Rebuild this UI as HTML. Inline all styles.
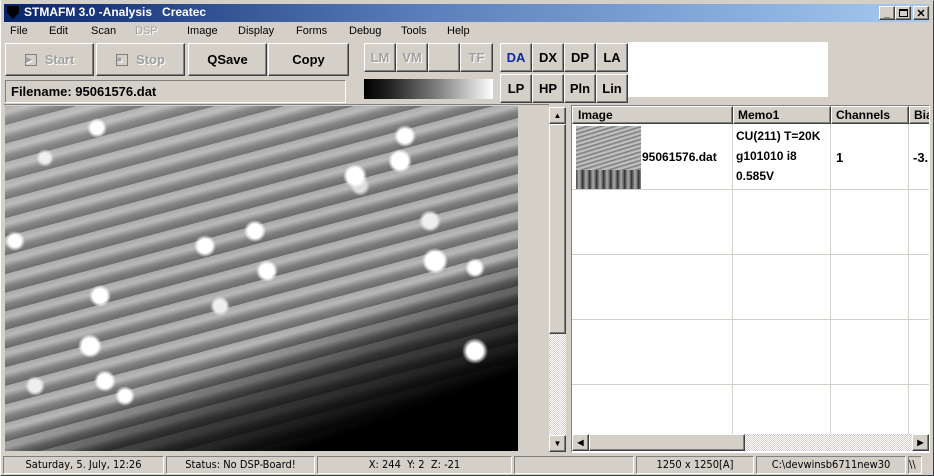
<!DOCTYPE html>
<html><head><style>
*{box-sizing:border-box;margin:0;padding:0}
html{overflow:hidden;width:934px;height:476px}
body{width:934px;height:476px;background:#d4d0c8;font-family:"Liberation Sans",sans-serif;font-size:11px;position:relative;overflow:hidden}
.a{position:absolute}
.btn{position:absolute;background:#d4d0c8;border:1px solid;border-color:#fff #404040 #404040 #fff;box-shadow:inset -1px -1px #808080;font-weight:bold;font-size:13px;display:flex;align-items:center;justify-content:center}
.dis{color:#a0a0a0;text-shadow:1px 1px #fff}
.sunk{position:absolute;border:1px solid;border-color:#808080 #fff #fff #808080}
.menu span{position:absolute;top:25px;font-size:11px}
.st{position:absolute;top:456px;height:18px;border:1px solid;border-color:#808080 #fff #fff #808080;font-size:11px;text-align:center;line-height:16px;font-family:"DejaVu Sans Condensed","Liberation Sans Narrow",sans-serif;overflow:hidden}
.gl{position:absolute;background:#d4d0c8}
</style></head><body>
<div class="a" style="left:0;top:0;width:934px;height:476px;border:1px solid;border-color:#d4d0c8 #404040 #404040 #fff"></div>
<div class="a" style="left:4px;top:4px;width:926px;height:18px;background:linear-gradient(90deg,#0a246a,#5a7eba 45%,#a6caf0)"></div>
<div class="a" style="left:7px;top:6px;width:12px;height:13px;background:#000;clip-path:polygon(0 0,100% 0,100% 50%,50% 100%,0 50%)"></div>
<div class="a" style="left:24px;top:5px;color:#fff;font-weight:bold;font-size:12px">STMAFM 3.0 -Analysis&nbsp;&nbsp;&nbsp;Createc</div>
<div class="btn" style="left:879px;top:6px;width:16px;height:14px;font-size:10px;align-items:flex-end">_</div>
<div class="btn" style="left:895px;top:6px;width:16px;height:14px"><div style="width:9px;height:8px;border:1px solid #000;border-top-width:2px"></div></div>
<div class="btn" style="left:913px;top:6px;width:16px;height:14px;font-size:11px">✕</div>
<div class="menu"><span style="left:10px">File</span><span style="left:49px">Edit</span><span style="left:91px">Scan</span><span style="left:135px" class="dis">DSP</span><span style="left:187px">Image</span><span style="left:238px">Display</span><span style="left:296px">Forms</span><span style="left:349px">Debug</span><span style="left:401px">Tools</span><span style="left:447px">Help</span></div>
<div class="btn dis" style="left:5px;top:43px;width:89px;height:33px"><span style="display:inline-block;width:12px;height:12px;border:1px solid #808080;margin-right:8px;font-size:8px;line-height:10px">▶</span>Start</div>
<div class="btn dis" style="left:96px;top:43px;width:89px;height:33px"><span style="display:inline-block;width:12px;height:12px;border:1px solid #808080;margin-right:8px;font-size:8px;line-height:10px">■</span>Stop</div>
<div class="btn" style="left:188px;top:43px;width:79px;height:33px">QSave</div>
<div class="btn" style="left:268px;top:43px;width:81px;height:33px">Copy</div>
<div class="btn dis" style="left:364px;top:43px;width:32px;height:29px">LM</div>
<div class="btn dis" style="left:396px;top:43px;width:32px;height:29px">VM</div>
<div class="btn" style="left:428px;top:43px;width:32px;height:29px"></div>
<div class="btn dis" style="left:460px;top:43px;width:33px;height:29px">TF</div>
<div class="a" style="left:364px;top:79px;width:129px;height:20px;background:linear-gradient(90deg,#000,#222 20%,#888 60%,#fff)"></div>
<div class="sunk" style="left:5px;top:80px;width:341px;height:23px;padding:3px 5px;font-weight:bold;font-size:13px">Filename: 95061576.dat</div>
<div class="btn" style="left:500px;top:43px;width:32px;height:29px;color:#0a2aa6">DA</div>
<div class="btn" style="left:532px;top:43px;width:32px;height:29px">DX</div>
<div class="btn" style="left:564px;top:43px;width:32px;height:29px">DP</div>
<div class="btn" style="left:596px;top:43px;width:32px;height:29px">LA</div>
<div class="btn" style="left:500px;top:74px;width:32px;height:29px">LP</div>
<div class="btn" style="left:532px;top:74px;width:32px;height:29px">HP</div>
<div class="btn" style="left:564px;top:74px;width:32px;height:29px">Pln</div>
<div class="btn" style="left:596px;top:74px;width:32px;height:29px">Lin</div>
<div class="a" style="left:628px;top:42px;width:200px;height:55px;background:#fff"></div>
<div class="a" style="left:4px;top:104px;width:545px;height:1px;background:#808080"></div>
<!-- STM image -->
<div class="a" style="left:5px;top:106px;width:513px;height:345px;overflow:hidden;background:#777">
<div class="a" style="left:-100px;top:-100px;width:750px;height:600px;transform:rotate(-15deg);background:repeating-linear-gradient(180deg,#a8a8a8 0,#b8b8b8 6px,#808080 12px,#6a6a6a 18px)"></div>
<div class="a" style="left:0;top:0;width:513px;height:345px;background:linear-gradient(160deg,rgba(255,255,255,.12),rgba(0,0,0,0) 40%)"></div>
<div class="a" style="left:0;top:0;width:513px;height:345px;background:linear-gradient(160deg,transparent 62%,rgba(0,0,0,.6) 72%,#000 85%)"></div>
<div class="a" style="left:0;top:0;width:513px;height:345px;background:
radial-gradient(circle at 92px 22px,#fff 6px,transparent 10px),
radial-gradient(circle at 40px 52px,#eee 5px,transparent 9px),
radial-gradient(circle at 400px 30px,#fff 7px,transparent 11px),
radial-gradient(circle at 395px 55px,#fff 8px,transparent 12px),
radial-gradient(circle at 350px 70px,#fff 8px,transparent 12px),
radial-gradient(circle at 425px 115px,#eee 7px,transparent 11px),
radial-gradient(circle at 430px 155px,#fff 9px,transparent 13px),
radial-gradient(circle at 250px 125px,#fff 7px,transparent 11px),
radial-gradient(circle at 200px 140px,#fff 7px,transparent 11px),
radial-gradient(circle at 262px 165px,#fff 7px,transparent 11px),
radial-gradient(circle at 10px 135px,#fff 6px,transparent 10px),
radial-gradient(circle at 95px 190px,#fff 7px,transparent 11px),
radial-gradient(circle at 215px 200px,#eee 6px,transparent 10px),
radial-gradient(circle at 470px 162px,#fff 6px,transparent 10px),
radial-gradient(circle at 85px 240px,#fff 8px,transparent 12px),
radial-gradient(circle at 100px 275px,#fff 7px,transparent 11px),
radial-gradient(circle at 120px 290px,#fff 6px,transparent 10px),
radial-gradient(circle at 30px 280px,#eee 6px,transparent 10px),
radial-gradient(circle at 470px 245px,#fff 8px,transparent 13px),
radial-gradient(circle at 355px 80px,#ddd 6px,transparent 10px)"></div>
</div>
<!-- scrollbar -->
<div class="a" style="left:549px;top:107px;width:17px;height:345px;background:repeating-conic-gradient(#d4d0c8 0 25%,#fff 0 50%) 0 0/2px 2px"></div>
<div class="btn" style="left:549px;top:107px;width:17px;height:17px;font-size:8px">▲</div>
<div class="btn" style="left:549px;top:124px;width:17px;height:210px"></div>
<div class="btn" style="left:549px;top:435px;width:17px;height:17px;font-size:8px">▼</div>
<!-- grid -->
<div class="sunk" style="left:571px;top:105px;width:359px;height:348px;background:#fff;overflow:hidden">
<div class="a" style="left:0;top:0;width:360px;height:18px;background:#d4d0c8;border-bottom:1px solid #808080"></div>
<div class="btn" style="left:0;top:0;width:161px;height:18px;font-size:12px;justify-content:flex-start;padding-left:5px">Image</div>
<div class="btn" style="left:161px;top:0;width:98px;height:18px;font-size:12px;justify-content:flex-start;padding-left:4px">Memo1</div>
<div class="btn" style="left:259px;top:0;width:78px;height:18px;font-size:12px;justify-content:flex-start;padding-left:4px">Channels</div>
<div class="btn" style="left:337px;top:0;width:40px;height:18px;font-size:12px;justify-content:flex-start;padding-left:4px">Bia</div>
<div class="gl" style="left:160px;top:18px;width:1px;height:330px"></div>
<div class="gl" style="left:258px;top:18px;width:1px;height:330px"></div>
<div class="gl" style="left:336px;top:18px;width:1px;height:330px"></div>
<div class="gl" style="left:0;top:83px;width:360px;height:1px"></div>
<div class="gl" style="left:0;top:148px;width:360px;height:1px"></div>
<div class="gl" style="left:0;top:213px;width:360px;height:1px"></div>
<div class="gl" style="left:0;top:278px;width:360px;height:1px"></div>
<div class="a" style="left:4px;top:20px;width:65px;height:63px;background:repeating-linear-gradient(163deg,#999 0,#ccc 2px,#666 4px)"></div>
<div class="a" style="left:4px;top:64px;width:65px;height:19px;background:repeating-linear-gradient(90deg,#444 0,#aaa 3px,#777 5px,#222 7px)"></div>
<div class="a" style="left:70px;top:44px;font-weight:bold;font-size:12px">95061576.dat</div>
<div class="a" style="left:164px;top:20px;font-weight:bold;font-size:12px;line-height:20px">CU(211) T=20K<br>g101010 i8<br>0.585V</div>
<div class="a" style="left:264px;top:44px;font-weight:bold;font-size:13px">1</div>
<div class="a" style="left:341px;top:44px;font-weight:bold;font-size:13px">-3.</div>
<div class="a" style="left:0;top:328px;width:360px;height:17px;background:repeating-conic-gradient(#d4d0c8 0 25%,#fff 0 50%) 0 0/2px 2px"></div>
<div class="btn" style="left:0;top:328px;width:17px;height:17px;font-size:8px">◀</div>
<div class="btn" style="left:17px;top:328px;width:156px;height:17px"></div>
<div class="btn" style="left:340px;top:328px;width:17px;height:17px;font-size:8px">▶</div>
</div>
<!-- status -->
<div class="st" style="left:3px;width:161px">Saturday, 5. July, 12:26</div>
<div class="st" style="left:166px;width:149px">Status: No DSP-Board!</div>
<div class="st" style="left:317px;width:195px">X: 244&nbsp; Y: 2&nbsp; Z: -21</div>
<div class="st" style="left:514px;width:120px"></div>
<div class="st" style="left:636px;width:118px">1250 x 1250[A]</div>
<div class="st" style="left:756px;width:150px">C:\devwinsb6711new30</div>
<div class="st" style="left:908px;width:14px;text-align:left">\\</div>
</body></html>
